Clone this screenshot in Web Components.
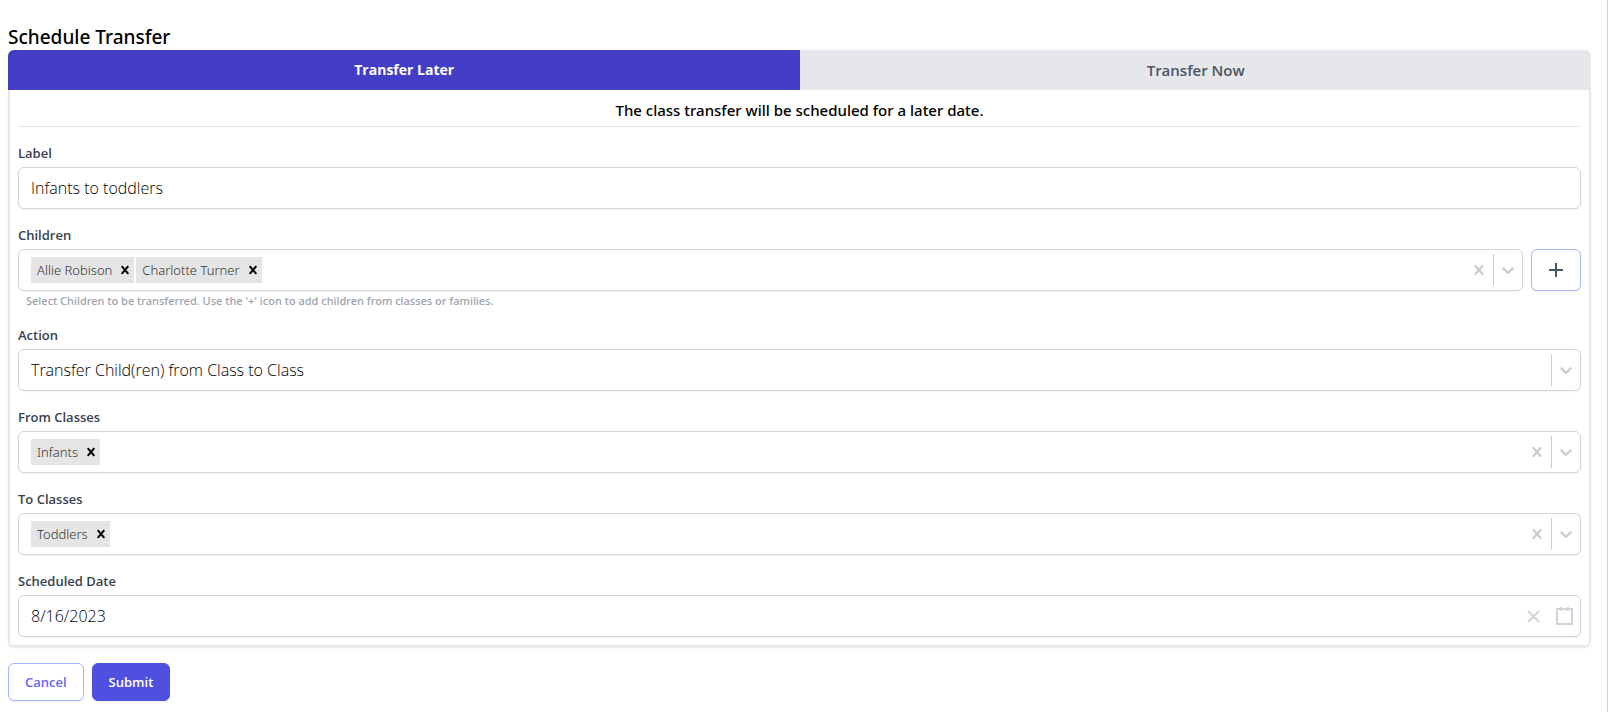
<!DOCTYPE html>
<html lang="en">
<head>
<meta charset="utf-8">
<title>Schedule Transfer</title>
<style>
  html { background: #fff; min-height: 100%; border-right: 1px solid #d4d4d8; box-sizing: border-box; }
  html, body { margin: 0; }
  body { font-family: "Noto Sans", "Open Sans", sans-serif; font-size: 15px; line-height: 24px; color: #000; }
</style>
</head>
<body>
<transfer-page></transfer-page>

<script>
const base = `
  *, *::before, *::after { box-sizing: border-box; }
  :host { display: block; }
  button, input, select { font: inherit; color: inherit; margin: 0; }
  button { cursor: pointer; background: none; border: 0; padding: 0; }
  svg { display: block; }
`;
const fieldStyle = `
  label { display: block; font-family: "Open Sans", sans-serif; font-size: 13px; line-height: 20px; font-weight: 600; color: #374151; margin-bottom: 4px; }
  .box { display: flex; align-items: center; min-height: 42px; border: 1px solid #d1d5db; border-radius: 6px;
         background: #fff; box-shadow: 0 1px 2px rgba(0,0,0,.05); }
  input, select { flex: 1; min-width: 0; width: 100%; height: 40px; border: 0; outline: 0; background: none;
                  padding: 0 12px; font-family: "Open Sans", sans-serif; font-size: 16px; font-weight: 300; appearance: none; }
`;
const define = (name, css, markup, setup) => customElements.define(name, class extends HTMLElement {
  connectedCallback() {
    if (this.shadowRoot) return;
    const t = document.createElement('template');
    t.innerHTML = `<style>${base}${css}</style>${typeof markup === 'function' ? markup(this) : markup}`;
    this.attachShadow({ mode: 'open' }).append(t.content.cloneNode(true));
    if (setup) setup(this);
  }
});

/* Small cross shared by clear buttons and chips */
define('cross-icon', `:host { width: var(--size, 20px); height: var(--size, 20px); } svg { width: 100%; height: 100%; fill: currentColor; }`,
  `<svg viewBox="0 0 20 20" aria-hidden="true"><path d="M14.348 14.849c-0.469 0.469-1.229 0.469-1.697 0l-2.651-3.030-2.651 3.029c-0.469 0.469-1.229 0.469-1.697 0-0.469-0.469-0.469-1.229 0-1.697l2.758-3.15-2.759-3.152c-0.469-0.469-0.469-1.228 0-1.697s1.228-0.469 1.697 0l2.652 3.031 2.651-3.031c0.469-0.469 1.228-0.469 1.697 0s0.469 1.229 0 1.697l-2.758 3.152 2.758 3.15c0.469 0.469 0.469 1.229 0 1.698z"/></svg>`);

define('select-arrow', `
    :host { display: flex; align-items: center; color: #ccc; pointer-events: none; }
    .line { width: 1px; height: 32px; background: #ccc; }
    svg { width: 20px; height: 20px; margin: 0 4px; fill: currentColor; }`,
  `<span class="line"></span><svg viewBox="0 0 20 20" aria-hidden="true"><path d="M4.516 7.548c0.436-0.446 1.043-0.481 1.576 0l3.908 3.747 3.908-3.747c0.533-0.481 1.141-0.446 1.574 0 0.436 0.445 0.408 1.197 0 1.615-0.406 0.418-4.695 4.502-4.695 4.502-0.217 0.223-0.502 0.335-0.787 0.335s-0.57-0.112-0.789-0.335c0 0-4.287-4.084-4.695-4.502s-0.436-1.17 0-1.615z"/></svg>`);

define('value-chip', `
    :host { display: flex; height: 26px; background: #e5e5e5; color: #333; font-size: 13px; line-height: 26px; font-weight: 300; flex: none; }
    span { padding: 0 4px 0 6px; white-space: nowrap; }
    button { width: 18px; display: grid; place-items: center; color: #000; }
    cross-icon { --size: 16px; }`,
  `<span><slot></slot></span><button type="button" aria-label="Remove"><cross-icon></cross-icon></button>`,
  el => el.shadowRoot.querySelector('button').addEventListener('click', () => el.remove()));

define('text-field', fieldStyle,
  el => `<label for="f">${el.getAttribute('label')}</label><div class="box"><input id="f" type="text" value="${el.getAttribute('value')}"></div>`);

define('choice-field', fieldStyle + `
    .box { position: relative; }
    select { padding-right: 40px; cursor: pointer; }
    select-arrow { position: absolute; right: 0; }`,
  el => `<label for="f">${el.getAttribute('label')}</label><div class="box"><select id="f"><option>${el.getAttribute('value')}</option></select><select-arrow></select-arrow></div>`);

define('multi-field', fieldStyle + `
    .row { display: flex; gap: 8px; }
    .box { flex: 1; padding-left: 12px; }
    .chips { display: flex; gap: 2px; }
    input { padding: 0 4px; }
    .clear { width: 28px; height: 28px; display: grid; place-items: center; color: #ccc; }`,
  el => `<label for="f">${el.getAttribute('label')}</label>
    <div class="row"><div class="box"><div class="chips"><slot></slot></div><input id="f" type="text" role="combobox" aria-expanded="false" autocomplete="off">
    <button class="clear" type="button" aria-label="Clear"><cross-icon></cross-icon></button><select-arrow></select-arrow></div><slot name="after"></slot></div>
    <slot name="hint"></slot>`);

define('add-button', `
    button { width: 50px; height: 42px; display: grid; place-items: center; border: 1px solid #a5b4fc; border-radius: 6px;
             background: #fff; color: #475569; box-shadow: 0 1px 2px rgba(0,0,0,.05); }`,
  `<button type="button" aria-label="Add children"><svg width="14" height="14" viewBox="0 0 14 14" stroke="currentColor" stroke-width="2" aria-hidden="true"><path d="M7 0v14M0 7h14"/></svg></button>`);

define('field-hint', `:host { padding-left: 8px; margin-top: 2px; font-size: 11px; line-height: 16px; font-weight: 500; color: #9ca3af; }`, `<slot></slot>`);

define('date-field', fieldStyle + `
    button { padding: 0 6px; color: #d1d5db; }
    svg { fill: none; stroke: currentColor; stroke-width: 2; }`,
  el => `<label for="f">${el.getAttribute('label')}</label><div class="box"><input id="f" type="text" inputmode="numeric" value="${el.getAttribute('value')}">
    <button type="button" aria-label="Clear date"><svg width="19" height="19" viewBox="0 0 19 19"><path d="M4 4L15 15M15 4L4 15"/></svg></button>
    <button type="button" aria-label="Open calendar"><svg width="19" height="19" viewBox="0 0 19 19"><path d="M2 2h15v15H2zM6 0v4M13 0v4"/></svg></button></div>`);

define('mode-tabs', `
    :host { display: flex; border-radius: 6px 6px 0 0; overflow: hidden; font-family: "Open Sans", sans-serif; }
    button { flex: 1 1 auto; height: 40px; background: #e5e7eb; color: #4b5563; font-weight: 600; }
    button[aria-selected="true"] { background: #433dc6; color: #fff; font-weight: 700; font-size: 14px; }`,
  `<button type="button" role="tab" aria-selected="true">Transfer Later</button><button type="button" role="tab" aria-selected="false">Transfer Now</button>`,
  el => el.setAttribute('role', 'tablist'));

define('form-card', `
    :host { display: flex; flex-direction: column; gap: 16px; padding: 8px; border: 2px solid #e5e7eb; border-top: 0;
            border-radius: 0 0 6px 6px; box-shadow: 0 1px 2px rgba(0,0,0,.1); }
    p { margin: 0; padding-bottom: 4px; border-bottom: 1px solid #e5e7eb; text-align: center; font-weight: 500; }`,
  `<p><slot name="intro"></slot></p><slot></slot>`);

define('form-actions', `
    :host { display: flex; gap: 8px; margin-top: 16px; font-family: "Open Sans", sans-serif; }
    button { height: 38px; padding: 0 16px; border: 1px solid #a5b4fc; border-radius: 6px; background: #fff; color: #6366f1;
             font-size: 13px; font-weight: 600; box-shadow: 0 1px 2px rgba(0,0,0,.05); }
    .submit { background: #4f4fe0; border-color: #4f4fe0; color: #fff; }`,
  `<button type="button">Cancel</button><button class="submit" type="submit">Submit</button>`);

define('transfer-page', `
    :host { padding: 24px 16px 8px 8px; }
    h1 { margin: 0; font-size: 19px; line-height: 26px; font-weight: 500; }`,
  `<h1>Schedule Transfer</h1>
   <mode-tabs></mode-tabs>
   <form-card>
     <span slot="intro">The class transfer will be scheduled for a later date.</span>
     <text-field label="Label" value="Infants to toddlers"></text-field>
     <multi-field label="Children">
       <value-chip>Allie Robison</value-chip><value-chip>Charlotte Turner</value-chip>
       <add-button slot="after"></add-button>
       <field-hint slot="hint">Select Children to be transferred. Use the '+' icon to add children from classes or families.</field-hint>
     </multi-field>
     <choice-field label="Action" value="Transfer Child(ren) from Class to Class"></choice-field>
     <multi-field label="From Classes"><value-chip>Infants</value-chip></multi-field>
     <multi-field label="To Classes"><value-chip>Toddlers</value-chip></multi-field>
     <date-field label="Scheduled Date" value="8/16/2023"></date-field>
   </form-card>
   <form-actions></form-actions>`);
</script>
</body>
</html>
